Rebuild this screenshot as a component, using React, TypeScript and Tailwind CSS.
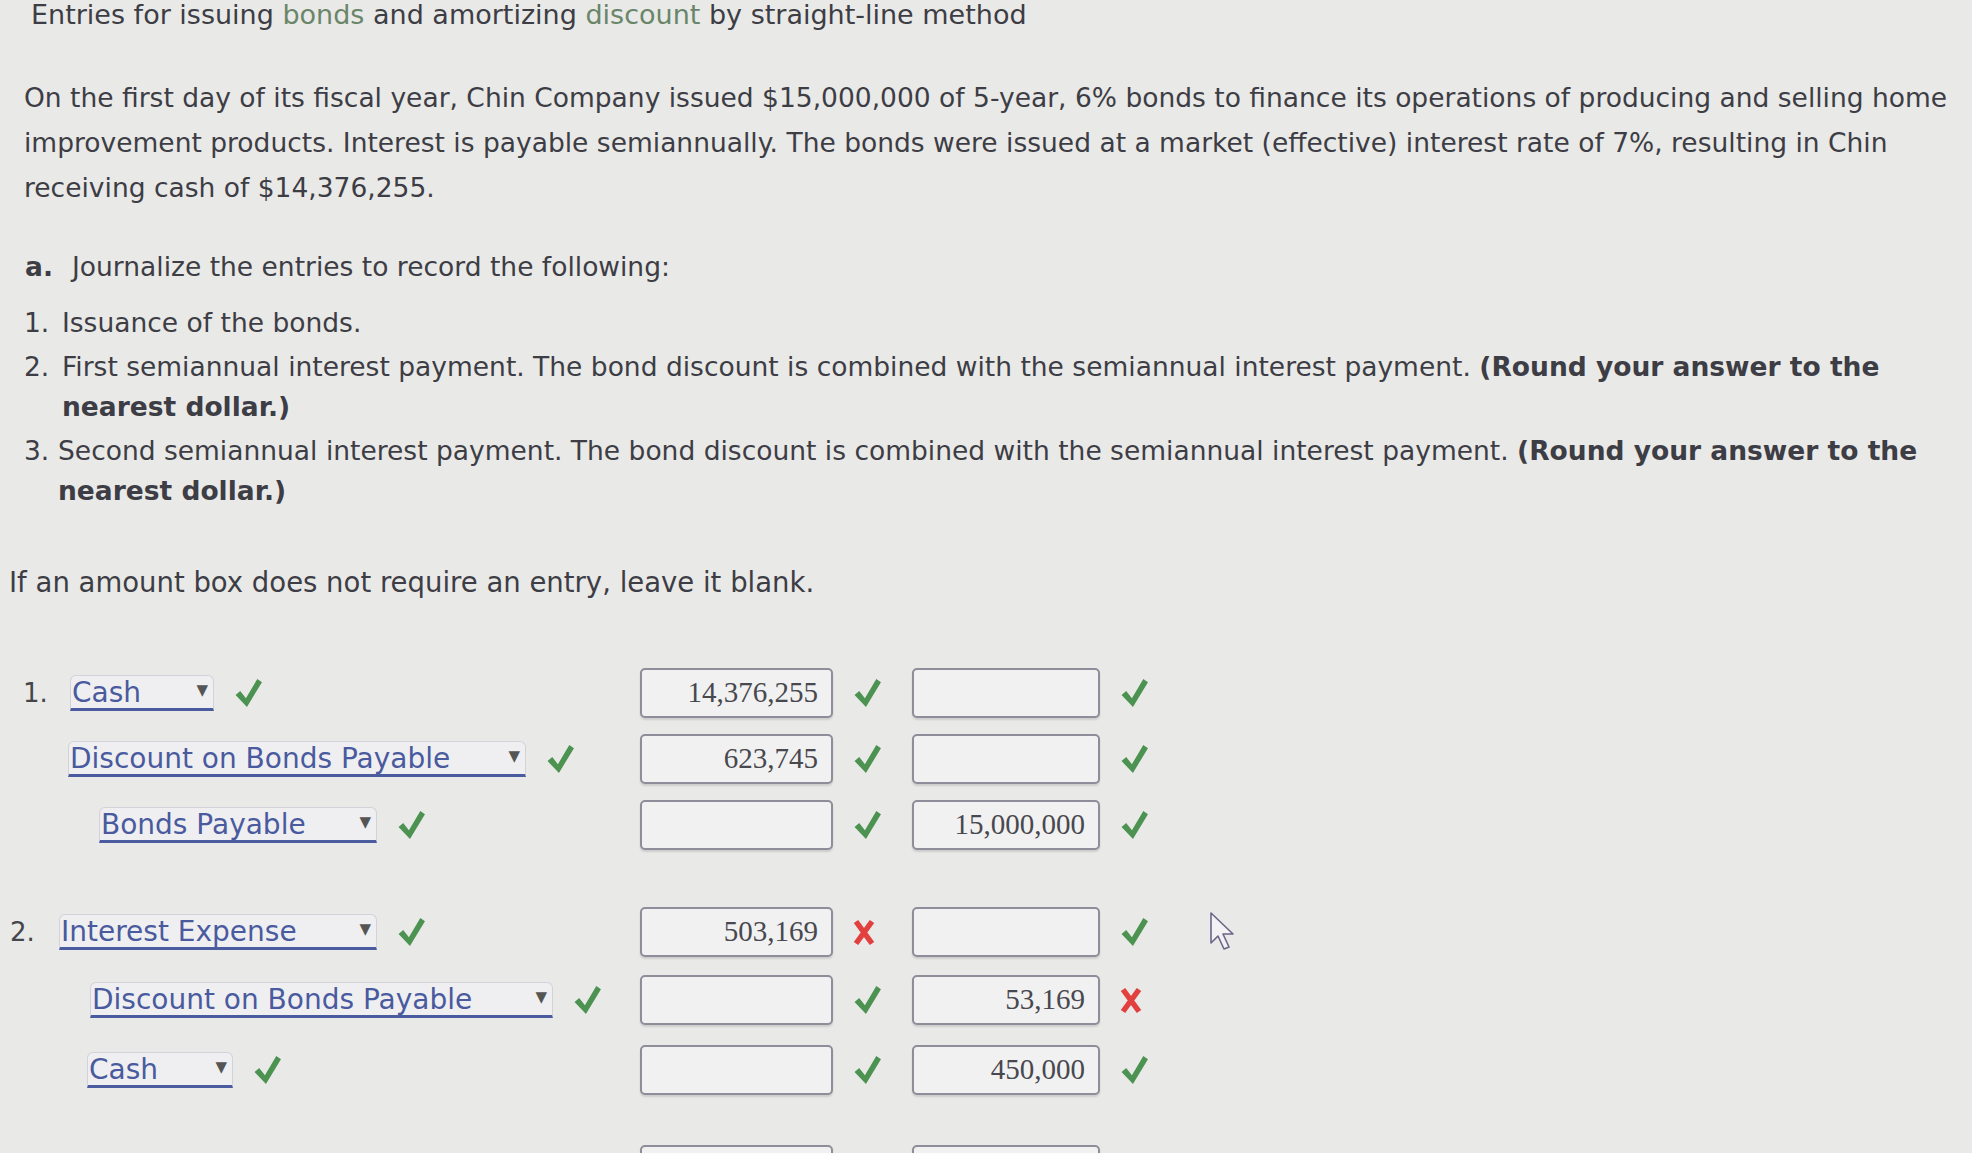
import React from 'react';

type Mark = 'ok' | 'x' | null;

const Check = () => (
  <svg width="29" height="32" viewBox="0 0 28 30" className="shrink-0">
    <path d="M1.5 17 L6 13 L11.5 20 L22.5 1.5 L27 4.5 L12.5 28.5 Z" fill="#4c9251" />
  </svg>
);

const Cross = () => (
  <svg width="22" height="27" viewBox="0 0 22 26" className="shrink-0">
    <path d="M3 2 L19 24 M19 2 L3 24" stroke="#e23f3f" strokeWidth="5.5" />
  </svg>
);

const MarkIcon = ({ m }: { m: Mark }) => (m === 'ok' ? <Check /> : m === 'x' ? <Cross /> : null);

function Select({ label, w }: { label: string; w: string }) {
  return (
    <div
      className={`${w} h-[36px] shrink-0 flex items-end justify-between rounded-t-[6px] border border-[#d2d2da] border-b-[3px] border-b-[#4b5ba0] bg-[#efeff1]`}
    >
      <span className="pl-[1px] leading-[31px] text-[28px] text-[#4a5a9e] whitespace-nowrap">{label}</span>
      <span className="mb-[10px] mr-[5px] text-[15px] leading-none text-[#555]">▼</span>
    </div>
  );
}

function AmountBox({ w, value }: { w: string; value?: string }) {
  return (
    <div
      className={`${w} h-[50px] shrink-0 flex items-center justify-end pr-[13px] rounded-[5px] border-2 border-[#8e8e9a] bg-[#f1f1f1] shadow-[0_2px_2px_rgba(0,0,0,0.12)] font-['Liberation_Serif',serif] text-[29px] text-[#48484f]`}
    >
      {value}
    </div>
  );
}

type RowProps = {
  h: string;
  pl: string;
  num?: string;
  numW?: string;
  label?: string;
  selW?: string;
  debit?: string;
  credit?: string;
  dMark: Mark;
  cMark: Mark;
  cursor?: boolean;
};

function Row({ h, pl, num, numW, label, selW, debit, credit, dMark, cMark, cursor }: RowProps) {
  return (
    <div className={`flex items-center ${h}`}>
      <div className={`flex items-center w-[640px] shrink-0 ${pl}`}>
        {num && <span className={`${numW} text-[26px] text-[#45454c]`}>{num}</span>}
        {label && selW && (
          <>
            <Select label={label} w={selW} />
            <span className="ml-[20px]">
              <Check />
            </span>
          </>
        )}
      </div>
      <AmountBox w="w-[193px]" value={debit} />
      <div className="w-[79px] pl-[20px] flex items-center">
        <MarkIcon m={dMark} />
      </div>
      <AmountBox w="w-[188px]" value={credit} />
      <div className="pl-[20px] flex items-center">
        <MarkIcon m={cMark} />
      </div>
      {cursor && (
        <svg width="30" height="42" viewBox="0 0 30 42" className="ml-[60px]">
          <path
            d="M2 2 L2 32 L9 25 L15 38 L20 36 L14 23 L24 23 Z"
            fill="#f2f2f4"
            stroke="#6e6488"
            strokeWidth="1.6"
            strokeLinejoin="round"
          />
        </svg>
      )}
    </div>
  );
}

export default function App() {
  return (
    <div className="h-[1153px] overflow-hidden bg-[#e9e9e7] text-[#3d3d45] font-['DejaVu_Sans','Verdana',sans-serif]">
      {/* Heading */}
      <h1 className="pl-[31px] text-[27px] leading-[30px] whitespace-nowrap">
        Entries for issuing <span className="text-[#6a866a]">bonds</span> and amortizing{' '}
        <span className="text-[#6a866a]">discount</span> by straight-line method
      </h1>

      {/* Problem text */}
      <div className="mt-[45px] pl-[24px] text-[26.5px] leading-[45px] whitespace-nowrap">
        <div>
          On the first day of its fiscal year, Chin Company issued $15,000,000 of 5-year, 6% bonds to finance its
          operations of producing and selling home
        </div>
        <div>
          improvement products. Interest is payable semiannually. The bonds were issued at a market (effective)
          interest rate of 7%, resulting in Chin
        </div>
        <div>receiving cash of $14,376,255.</div>
      </div>

      <div className="mt-[37px] pl-[25px] text-[26.5px] leading-[40px] whitespace-nowrap">
        <span className="inline-block w-[47px] font-bold">a.</span>Journalize the entries to record the following:
      </div>

      <ol className="mt-[16px] pl-[24px] text-[26.5px] leading-[40px] flex flex-col gap-[4px]">
        <li className="flex">
          <span className="w-[38px] shrink-0">1.</span>
          <span>Issuance of the bonds.</span>
        </li>
        <li className="flex">
          <span className="w-[38px] shrink-0">2.</span>
          <span>
            <span className="whitespace-nowrap">
              First semiannual interest payment. The bond discount is combined with the semiannual interest payment.{' '}
              <b>(Round your answer to the</b>
            </span>
            <br />
            <b>nearest dollar.)</b>
          </span>
        </li>
        <li className="flex">
          <span className="w-[34px] shrink-0">3.</span>
          <span>
            <span className="whitespace-nowrap">
              Second semiannual interest payment. The bond discount is combined with the semiannual interest payment.{' '}
              <b>(Round your answer to the</b>
            </span>
            <br />
            <b>nearest dollar.)</b>
          </span>
        </li>
      </ol>

      <p className="mt-[51px] pl-[9px] text-[27.5px] leading-[40px] whitespace-nowrap">
        If an amount box does not require an entry, leave it blank.
      </p>

      {/* Journal entries */}
      <div className="mt-[58px]">
        <Row h="h-[66px]" pl="pl-[23px]" num="1." numW="w-[47px]" label="Cash" selW="w-[144px]" debit="14,376,255" dMark="ok" cMark="ok" />
        <Row h="h-[66px]" pl="pl-[68px]" label="Discount on Bonds Payable" selW="w-[458px]" debit="623,745" dMark="ok" cMark="ok" />
        <Row h="h-[66px]" pl="pl-[99px]" label="Bonds Payable" selW="w-[278px]" credit="15,000,000" dMark="ok" cMark="ok" />
      </div>
      <div className="mt-[40px]">
        <Row h="h-[68px]" pl="pl-[10px]" num="2." numW="w-[49px]" label="Interest Expense" selW="w-[318px]" debit="503,169" dMark="x" cMark="ok" cursor />
        <Row h="h-[68px]" pl="pl-[90px]" label="Discount on Bonds Payable" selW="w-[463px]" credit="53,169" dMark="ok" cMark="x" />
        <Row h="h-[72px]" pl="pl-[87px]" label="Cash" selW="w-[146px]" credit="450,000" dMark="ok" cMark="ok" />
      </div>
      <div className="mt-[30px]">
        <Row h="h-[68px]" pl="pl-[4px]" dMark={null} cMark={null} />
      </div>
    </div>
  );
}
